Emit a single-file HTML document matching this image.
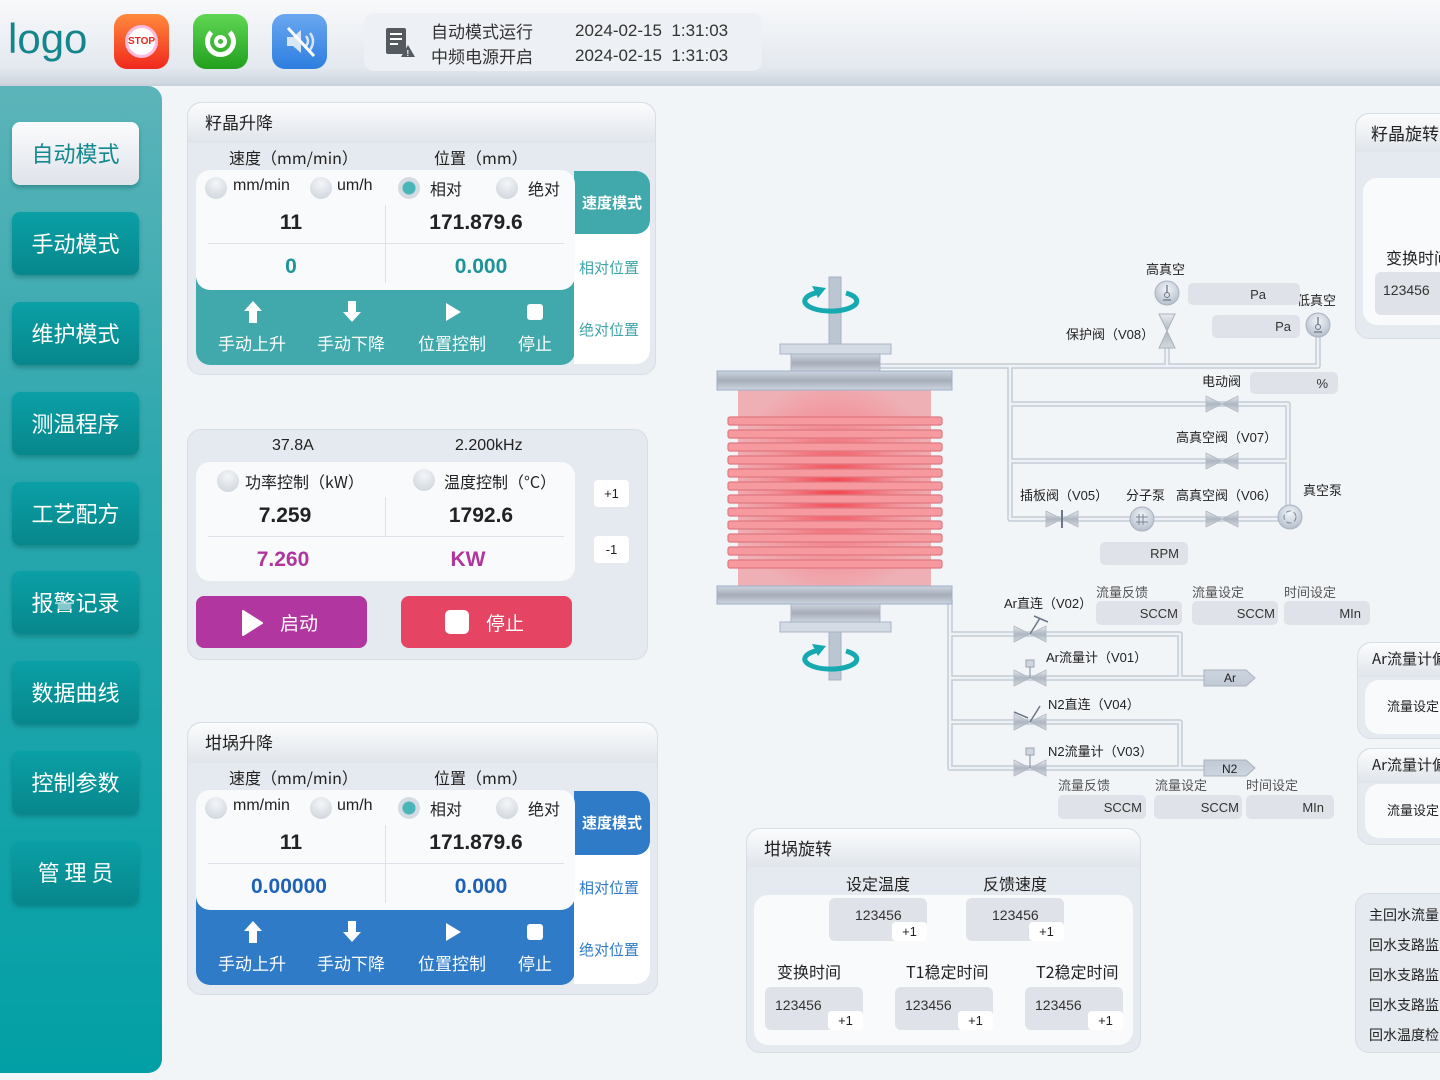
<!DOCTYPE html>
<html><head><meta charset="utf-8">
<style>
*{box-sizing:border-box;margin:0;padding:0}
body{width:1440px;height:1080px;overflow:hidden;background:#f2f5f8;font-family:"Liberation Sans","Noto Sans CJK SC",sans-serif;color:#222;position:relative}
.a{position:absolute;white-space:nowrap}
.hdr{left:0;top:0;width:1440px;height:86px;background:linear-gradient(#f8f9fb,#e4e9ef 80%,#cfd6df);border-bottom:2px solid #c9d1dc}
.ico{top:14px;width:55px;height:55px;border-radius:13px}
.side{left:0;top:86px;width:162px;height:987px;background:linear-gradient(#5cb4b9,#2aa7ad 40%,#02a0a6);border-radius:0 14px 14px 0}
.nb{left:12px;width:127px;height:63px;border-radius:8px;background:linear-gradient(#0aa0a6,#07878c);color:#fff;font-size:22px;text-align:center;line-height:62px;box-shadow:0 3px 4px rgba(0,80,80,.35);font-family:"Noto Sans CJK SC",sans-serif}
.nb.on{background:linear-gradient(#fbfcfd,#dfe3ea);color:#12898f}
.pan{background:#e5eaf0;border-radius:14px;border:1px solid #d8dee6}
.ph{height:40px;border-radius:14px 14px 0 0;background:linear-gradient(#fbfcfd,#e0e5eb);font-size:17px;padding:6px 0 0 17px;font-family:"Noto Sans CJK SC",sans-serif;white-space:nowrap;overflow:hidden}
.card{background:#f8fafc;border-radius:14px}
.cn{font-family:"Noto Sans CJK SC",sans-serif}
.rad{width:22px;height:22px;border-radius:50%;background:radial-gradient(circle at 50% 30%,#f4f6f8,#c9d0d9)}
.rad.on{background:radial-gradient(circle,#48b5b8 0 6px,#d5dbe2 7px)}
.t15{font-size:16px}
.big{font-size:21px;font-weight:bold;text-align:center}
.btn{color:#fff;font-size:17px;text-align:center}
.box{background:#dfe3e9;border-radius:6px;font-size:14px;text-align:right;padding-right:12px;color:#333}
.pb{background:#fff;border-radius:4px;font-size:13px;text-align:center}
</style></head><body>
<div class="a hdr"></div>
<div class="a" style="left:8px;top:14px;font-size:42px;line-height:50px;color:#15858c;font-family:'Liberation Sans',sans-serif">logo</div>
<div class="a ico" style="left:114px;background:linear-gradient(#ff8a3c,#f0281e)"><div class="a" style="left:11px;top:11px;width:33px;height:33px;border-radius:50%;background:#fff;color:#e8281c;font-size:10px;font-weight:bold;text-align:center;line-height:27px;border:3px solid #fbd">STOP</div></div>
<div class="a ico" style="left:193px;background:linear-gradient(#5fd654,#22a01e)"><div class="a" style="left:12px;top:12px;width:31px;height:31px;border-radius:50%;border:5px solid #fff;border-top-color:transparent"></div><div class="a" style="left:21px;top:21px;width:13px;height:13px;border-radius:50%;border:4px solid #fff"></div></div>
<div class="a ico" style="left:272px;background:linear-gradient(#6aa7f0,#2d7ee0)"><svg class="a" style="left:10px;top:10px" width="35" height="35"><path d="M5 13h6l8-7v23l-8-7H5z" fill="#d8e6f6"/><path d="M24 12q4 5 0 10M28 9q6 8 0 17" stroke="#d8e6f6" stroke-width="2.5" fill="none"/><path d="M6 4l26 28" stroke="#fff" stroke-width="3"/></svg></div>
<div class="a" style="left:364px;top:13px;width:398px;height:58px;background:#edf0f4;border-radius:10px"></div>
<svg class="a" style="left:384px;top:27px" width="34" height="32"><rect x="2" y="1" width="20" height="26" rx="2" fill="#555a60"/><path d="M6 7h12M6 12h12M6 17h8" stroke="#fff" stroke-width="2"/><path d="M24 18l7 12h-14z" fill="#555a60"/><text x="22.5" y="29" font-size="8" fill="#fff" font-weight="bold">!</text></svg>
<div class="a cn" style="left:431px;top:18px;font-size:17px;line-height:25px;color:#333">自动模式运行<br>中频电源开启</div>
<div class="a" style="left:575px;top:18px;font-size:17px;line-height:25px;color:#333">2024-02-15&nbsp; 1:31:03<br>2024-02-15&nbsp; 1:31:03</div>

<div class="a side"></div>
<div class="a nb on" style="top:122px">自动模式</div>
<div class="a nb" style="top:212px">手动模式</div>
<div class="a nb" style="top:302px">维护模式</div>
<div class="a nb" style="top:392px">测温程序</div>
<div class="a nb" style="top:482px">工艺配方</div>
<div class="a nb" style="top:571px">报警记录</div>
<div class="a nb" style="top:661px">数据曲线</div>
<div class="a nb" style="top:751px">控制参数</div>
<div class="a nb" style="top:841px">管 理 员</div>

<div class="a pan" style="left:187px;top:102px;width:469px;height:273px"><div class="ph">籽晶升降</div></div>
<div class="a pan" style="left:187px;top:722px;width:471px;height:273px"><div class="ph">坩埚升降</div></div>

<div class="a" style="left:0;top:0">
<div class="a cn t15" style="left:229px;top:145px">速度（mm/min）</div>
<div class="a cn t15" style="left:434px;top:145px">位置（mm）</div>
<div class="a" style="left:196px;top:270px;width:379px;height:95px;background:#41a8ab;border-radius:0 0 14px 14px"></div>
<div class="a" style="left:574px;top:171px;width:76px;height:193px;background:#fff;border-radius:0 14px 14px 0"></div>
<div class="a cn" style="left:574px;top:171px;width:76px;height:63px;background:#41a8ab;border-radius:0 14px 14px 0;color:#fff;font-size:15px;text-align:center;line-height:63px;font-weight:bold">速度模式</div>
<div class="a cn" style="left:579px;top:257px;font-size:15px;color:#3fa5a8">相对位置</div>
<div class="a cn" style="left:579px;top:319px;font-size:15px;color:#3fa5a8">绝对位置</div>
<div class="a card" style="left:196px;top:170px;width:379px;height:120px"></div>
<div class="a rad" style="left:205px;top:177px"></div><div class="a t15" style="left:233px;top:177px">mm/min</div>
<div class="a rad" style="left:310px;top:177px"></div><div class="a t15" style="left:337px;top:177px">um/h</div>
<div class="a rad on" style="left:398px;top:177px"></div><div class="a cn t15" style="left:430px;top:176px">相对</div>
<div class="a rad" style="left:496px;top:177px"></div><div class="a cn t15" style="left:528px;top:176px">绝对</div>
<div class="a" style="left:385px;top:205px;width:1px;height:78px;background:#dde2e8"></div>
<div class="a" style="left:208px;top:243px;width:356px;height:1px;background:#dde2e8"></div>
<div class="a big" style="left:196px;top:211px;width:190px">11</div>
<div class="a big" style="left:386px;top:211px;width:180px">171.879.6</div>
<div class="a big" style="left:196px;top:255px;width:190px;color:#1e9499">0</div>
<div class="a big" style="left:386px;top:255px;width:190px;color:#1e9499">0.000</div>
<svg class="a" style="left:240px;top:300px" width="310" height="26" fill="#fff"><path d="M13 1l9 10h-5v12h-8v-12h-5z"/><path d="M112 22l9-10h-5v-11h-8v11h-5z"/><path d="M206 3l15 9-15 9z"/><rect x="287" y="4" width="16" height="16" rx="3"/></svg>
<div class="a cn btn" style="left:218px;top:330px">手动上升</div>
<div class="a cn btn" style="left:317px;top:330px">手动下降</div>
<div class="a cn btn" style="left:418px;top:330px">位置控制</div>
<div class="a cn btn" style="left:518px;top:330px">停止</div>
</div>

<div class="a" style="left:0;top:620px">
<div class="a cn t15" style="left:229px;top:145px">速度（mm/min）</div>
<div class="a cn t15" style="left:434px;top:145px">位置（mm）</div>
<div class="a" style="left:196px;top:270px;width:379px;height:95px;background:#2f7bc8;border-radius:0 0 14px 14px"></div>
<div class="a" style="left:574px;top:171px;width:76px;height:193px;background:#fff;border-radius:0 14px 14px 0"></div>
<div class="a cn" style="left:574px;top:171px;width:76px;height:64px;background:#2f7bc8;border-radius:0 14px 14px 0;color:#fff;font-size:15px;text-align:center;line-height:64px;font-weight:bold">速度模式</div>
<div class="a cn" style="left:579px;top:257px;font-size:15px;color:#2f7bc8">相对位置</div>
<div class="a cn" style="left:579px;top:319px;font-size:15px;color:#2f7bc8">绝对位置</div>
<div class="a card" style="left:196px;top:170px;width:379px;height:120px"></div>
<div class="a rad" style="left:205px;top:177px"></div><div class="a t15" style="left:233px;top:177px">mm/min</div>
<div class="a rad" style="left:310px;top:177px"></div><div class="a t15" style="left:337px;top:177px">um/h</div>
<div class="a rad on" style="left:398px;top:177px"></div><div class="a cn t15" style="left:430px;top:176px">相对</div>
<div class="a rad" style="left:496px;top:177px"></div><div class="a cn t15" style="left:528px;top:176px">绝对</div>
<div class="a" style="left:385px;top:205px;width:1px;height:78px;background:#dde2e8"></div>
<div class="a" style="left:208px;top:243px;width:356px;height:1px;background:#dde2e8"></div>
<div class="a big" style="left:196px;top:211px;width:190px">11</div>
<div class="a big" style="left:386px;top:211px;width:180px">171.879.6</div>
<div class="a big" style="left:196px;top:255px;width:186px;color:#1e62b8">0.00000</div>
<div class="a big" style="left:386px;top:255px;width:190px;color:#1e62b8">0.000</div>
<svg class="a" style="left:240px;top:300px" width="310" height="26" fill="#fff"><path d="M13 1l9 10h-5v12h-8v-12h-5z"/><path d="M112 22l9-10h-5v-11h-8v11h-5z"/><path d="M206 3l15 9-15 9z"/><rect x="287" y="4" width="16" height="16" rx="3"/></svg>
<div class="a cn btn" style="left:218px;top:330px">手动上升</div>
<div class="a cn btn" style="left:317px;top:330px">手动下降</div>
<div class="a cn btn" style="left:418px;top:330px">位置控制</div>
<div class="a cn btn" style="left:518px;top:330px">停止</div>
</div>

<div class="a pan" style="left:187px;top:429px;width:461px;height:231px"></div>
<div class="a t15" style="left:272px;top:437px">37.8A</div>
<div class="a t15" style="left:455px;top:437px">2.200kHz</div>
<div class="a card" style="left:196px;top:462px;width:379px;height:119px"></div>
<div class="a rad" style="left:217px;top:470px"></div><div class="a cn t15" style="left:245px;top:469px">功率控制（kW）</div>
<div class="a rad" style="left:413px;top:469px"></div><div class="a cn t15" style="left:444px;top:469px">温度控制（°C）</div>
<div class="a" style="left:385px;top:497px;width:1px;height:40px;background:#dde2e8"></div>
<div class="a" style="left:208px;top:536px;width:356px;height:1px;background:#dde2e8"></div>
<div class="a big" style="left:190px;top:504px;width:190px">7.259</div>
<div class="a big" style="left:386px;top:504px;width:190px">1792.6</div>
<div class="a big" style="left:188px;top:548px;width:190px;color:#b0369f">7.260</div>
<div class="a big" style="left:373px;top:548px;width:190px;color:#b0369f">KW</div>
<div class="a pb" style="left:594px;top:480px;width:35px;height:27px;line-height:27px">+1</div>
<div class="a pb" style="left:594px;top:536px;width:35px;height:27px;line-height:27px">-1</div>
<div class="a" style="left:196px;top:596px;width:171px;height:52px;background:#b2369f;border-radius:8px"></div>
<svg class="a" style="left:240px;top:609px" width="24" height="28"><path d="M3 2l19 12-19 12z" fill="#fff" stroke="#fff" stroke-linejoin="round" stroke-width="2"/></svg>
<div class="a cn" style="left:280px;top:609px;color:#fff;font-size:19px">启动</div>
<div class="a" style="left:401px;top:596px;width:171px;height:52px;background:#e54462;border-radius:8px"></div>
<div class="a" style="left:445px;top:610px;width:24px;height:24px;background:#fff;border-radius:5px"></div>
<div class="a cn" style="left:486px;top:609px;color:#fff;font-size:19px">停止</div>

<div class="a pan" style="left:746px;top:828px;width:395px;height:225px"><div class="ph" style="height:38px">坩埚旋转</div></div>
<div class="a card" style="left:754px;top:895px;width:379px;height:150px"></div>
<div class="a cn t15" style="left:846px;top:871px">设定温度</div>
<div class="a cn t15" style="left:983px;top:871px">反馈速度</div>
<div class="a box" style="left:829px;top:898px;width:98px;height:43px;text-align:left;padding:9px 0 0 26px">123456</div><div class="a pb" style="left:892px;top:922px;width:35px;height:19px;line-height:19px">+1</div>
<div class="a box" style="left:966px;top:898px;width:98px;height:43px;text-align:left;padding:9px 0 0 26px">123456</div><div class="a pb" style="left:1029px;top:922px;width:35px;height:19px;line-height:19px">+1</div>
<div class="a cn t15" style="left:777px;top:959px">变换时间</div>
<div class="a cn t15" style="left:906px;top:959px">T1稳定时间</div>
<div class="a cn t15" style="left:1036px;top:959px">T2稳定时间</div>
<div class="a box" style="left:765px;top:987px;width:98px;height:43px;text-align:left;padding:10px 0 0 10px">123456</div><div class="a pb" style="left:828px;top:1011px;width:35px;height:19px;line-height:19px">+1</div>
<div class="a box" style="left:895px;top:987px;width:98px;height:43px;text-align:left;padding:10px 0 0 10px">123456</div><div class="a pb" style="left:958px;top:1011px;width:35px;height:19px;line-height:19px">+1</div>
<div class="a box" style="left:1025px;top:987px;width:98px;height:43px;text-align:left;padding:10px 0 0 10px">123456</div><div class="a pb" style="left:1088px;top:1011px;width:35px;height:19px;line-height:19px">+1</div>

<div class="a pan" style="left:1355px;top:113px;width:100px;height:226px"><div class="ph" style="height:38px;padding-left:15px">籽晶旋转</div></div>
<div class="a card" style="left:1363px;top:178px;width:90px;height:147px"></div>
<div class="a cn t15" style="left:1386px;top:245px">变换时间</div>
<div class="a box" style="left:1375px;top:272px;width:80px;height:43px;text-align:left;padding:10px 0 0 8px">123456</div>
<div class="a pan" style="left:1357px;top:642px;width:100px;height:97px"><div class="ph" style="height:34px;padding:5px 0 0 14px;font-size:15px">Ar流量计偏差</div></div>
<div class="a card" style="left:1365px;top:680px;width:90px;height:54px"></div><div class="a cn" style="left:1387px;top:696px;font-size:13px">流量设定</div>
<div class="a pan" style="left:1357px;top:748px;width:100px;height:97px"><div class="ph" style="height:34px;padding:5px 0 0 14px;font-size:15px">Ar流量计偏差</div></div>
<div class="a card" style="left:1365px;top:784px;width:90px;height:54px"></div><div class="a cn" style="left:1387px;top:800px;font-size:13px">流量设定</div>
<div class="a pan" style="left:1355px;top:893px;width:100px;height:160px"></div>
<div class="a cn" style="left:1369px;top:900px;font-size:14px;line-height:30px">主回水流量<br>回水支路监<br>回水支路监<br>回水支路监<br>回水温度检</div>

<svg class="a" style="left:0;top:0" width="1440" height="1080">
<defs>
<linearGradient id="vg" x1="0" y1="0" x2="0" y2="1"><stop offset="0" stop-color="#e8ecf1"/><stop offset=".5" stop-color="#aeb6c0"/><stop offset="1" stop-color="#d4d9e0"/></linearGradient>
<linearGradient id="pl" x1="0" y1="0" x2="0" y2="1"><stop offset="0" stop-color="#cdd5e0"/><stop offset=".5" stop-color="#a6adb8"/><stop offset="1" stop-color="#cdd5e0"/></linearGradient>
<radialGradient id="ht" cx=".5" cy=".5" r=".55"><stop offset="0" stop-color="#f4424c"/><stop offset=".6" stop-color="#f2939a"/><stop offset="1" stop-color="#eeb0b5"/></radialGradient>
<radialGradient id="gg" cx=".5" cy=".35" r=".6"><stop offset="0" stop-color="#f2f5f8"/><stop offset="1" stop-color="#b9c3cf"/></radialGradient>
<g id="bv"><path d="M-16 -8L0 0L-16 8Z M16 -8L0 0L16 8Z" fill="url(#vg)" stroke="#b0b8c2" stroke-width=".8"/></g>
</defs>
<g fill="none" stroke="#c4ccd6" stroke-width="5.5" stroke-linejoin="round">
<path d="M880 366H1318V328"/><path d="M1167 366V345"/>
<path d="M1010 366V519H1290"/><path d="M1010 404H1288V517"/><path d="M1010 461H1288"/>
<path d="M950 600V768H1205"/><path d="M950 634H1180V678"/><path d="M950 678H1205"/><path d="M950 722H1180V768"/>
</g>
<g fill="none" stroke="#eef1f5" stroke-width="2.5" stroke-linejoin="round">
<path d="M880 366H1318V328"/><path d="M1167 366V345"/>
<path d="M1010 366V519H1290"/><path d="M1010 404H1288V517"/><path d="M1010 461H1288"/>
<path d="M950 600V768H1205"/><path d="M950 634H1180V678"/><path d="M950 678H1205"/><path d="M950 722H1180V768"/>
</g>
<rect x="829" y="277" width="12" height="403" fill="#bcc6d3" stroke="#a6b2c2"/>
<rect x="780" y="344" width="111" height="10" fill="#d4dbe4" stroke="#a9b5c6"/>
<rect x="791" y="354" width="89" height="18" fill="url(#pl)" stroke="#a9b5c6"/>
<rect x="738" y="389" width="193" height="197" fill="url(#ht)"/>
<g fill="#f79aa0" stroke="#e07880" stroke-width="1.2">
<rect x="728" y="417" width="214" height="8" rx="2"/><rect x="728" y="430" width="214" height="8" rx="2"/><rect x="728" y="443" width="214" height="8" rx="2"/><rect x="728" y="456" width="214" height="8" rx="2"/><rect x="728" y="469" width="214" height="8" rx="2"/><rect x="728" y="482" width="214" height="8" rx="2"/><rect x="728" y="495" width="214" height="8" rx="2"/><rect x="728" y="508" width="214" height="8" rx="2"/><rect x="728" y="521" width="214" height="8" rx="2"/><rect x="728" y="534" width="214" height="8" rx="2"/><rect x="728" y="547" width="214" height="8" rx="2"/><rect x="728" y="560" width="214" height="8" rx="2"/>
</g>
<rect x="717" y="371" width="235" height="19" fill="url(#pl)" stroke="#9fb0c8"/>
<rect x="717" y="586" width="235" height="18" fill="url(#pl)" stroke="#9fb0c8"/>
<rect x="791" y="604" width="89" height="18" fill="url(#pl)" stroke="#a9b5c6"/>
<rect x="780" y="622" width="111" height="10" fill="#d4dbe4" stroke="#a9b5c6"/>
<g fill="none" stroke="#16aab0" stroke-width="5"><path d="M846 293a26 10 0 1 1 -26 -1"/><path d="M846 651a26 10 0 1 1 -26 -1"/></g>
<path d="M812 286l14 2-8 10z M812 644l14 2-8 10z" fill="#16aab0"/>
<circle cx="1167" cy="293" r="12" fill="url(#gg)" stroke="#a8b3c0"/><circle cx="1318" cy="325" r="12" fill="url(#gg)" stroke="#a8b3c0"/>
<path d="M1167 285v8M1163 300h8M1318 317v8M1314 332h8" stroke="#6b7686" stroke-width="1.3"/><circle cx="1167" cy="295" r="2.5" fill="none" stroke="#6b7686"/><circle cx="1318" cy="327" r="2.5" fill="none" stroke="#6b7686"/>
<path d="M1159 314h16l-8 17 8 17h-16l8-17z" fill="url(#vg)" stroke="#aab2bc"/>
<use href="#bv" x="1222" y="404"/><use href="#bv" x="1222" y="461"/><use href="#bv" x="1062" y="519"/><use href="#bv" x="1222" y="519"/>
<path d="M1062 510v18" stroke="#6b7686" stroke-width="2"/>
<circle cx="1142" cy="519" r="12" fill="url(#gg)" stroke="#a8b3c0"/><path d="M1136 517h12M1136 522h12M1139 514v11M1143 514v11" stroke="#7a8696"/>
<circle cx="1290" cy="517" r="12" fill="url(#gg)" stroke="#a8b3c0"/><circle cx="1290" cy="517" r="6" fill="none" stroke="#7a8696" stroke-dasharray="5 3"/>
<use href="#bv" x="1030" y="634"/><use href="#bv" x="1030" y="678"/><use href="#bv" x="1030" y="722"/><use href="#bv" x="1030" y="768"/>
<path d="M1030 634l10-16M1034 616l14 6M1030 722l10-16M1014 712l14 6" stroke="#6b7686" stroke-width="1.5"/>
<rect x="1026" y="660" width="8" height="7" fill="#d0d6de" stroke="#9aa4b0"/><path d="M1030 667v11" stroke="#7a8696"/>
<rect x="1026" y="748" width="8" height="7" fill="#d0d6de" stroke="#9aa4b0"/><path d="M1030 755v13" stroke="#7a8696"/>
<path d="M1204 670h42l9 8-9 8h-42z M1204 760h42l9 8-9 8h-42z" fill="url(#pl)" stroke="#aab3bd"/>
<g font-family="Liberation Sans,Noto Sans CJK SC,sans-serif" font-size="13" fill="#222">
<text x="1146" y="274">高真空</text><text x="1297" y="305">低真空</text><text x="1066" y="339">保护阀（V08）</text>
<text x="1202" y="386">电动阀</text><text x="1176" y="442">高真空阀（V07）</text>
<text x="1020" y="500">插板阀（V05）</text><text x="1126" y="500">分子泵</text><text x="1176" y="500">高真空阀（V06）</text><text x="1303" y="495">真空泵</text>
<text x="1004" y="608">Ar直连（V02）</text><text x="1046" y="662">Ar流量计（V01）</text><text x="1048" y="709">N2直连（V04）</text><text x="1048" y="756">N2流量计（V03）</text>
<text x="1224" y="682" font-size="12">Ar</text><text x="1222" y="773" font-size="12">N2</text>
</g>
<g font-family="Liberation Sans,Noto Sans CJK SC,sans-serif" font-size="13" fill="#555">
<text x="1096" y="597">流量反馈</text><text x="1192" y="597">流量设定</text><text x="1284" y="597">时间设定</text>
<text x="1058" y="790">流量反馈</text><text x="1155" y="790">流量设定</text><text x="1246" y="790">时间设定</text>
</g>
<g fill="#dfe3e9"><rect x="1188" y="283" width="112" height="22" rx="5"/><rect x="1212" y="315" width="88" height="23" rx="5"/><rect x="1250" y="372" width="88" height="22" rx="5"/><rect x="1100" y="542" width="88" height="23" rx="5"/>
<rect x="1096" y="601" width="86" height="24" rx="5"/><rect x="1192" y="601" width="86" height="24" rx="5"/><rect x="1284" y="601" width="86" height="24" rx="5"/>
<rect x="1058" y="795" width="88" height="24" rx="5"/><rect x="1154" y="795" width="88" height="24" rx="5"/><rect x="1246" y="795" width="88" height="24" rx="5"/></g>
<g font-family="Liberation Sans,sans-serif" font-size="13" fill="#333" text-anchor="end">
<text x="1266" y="299">Pa</text><text x="1291" y="331">Pa</text><text x="1328" y="388">%</text><text x="1179" y="558">RPM</text>
<text x="1178" y="618">SCCM</text><text x="1275" y="618">SCCM</text><text x="1361" y="618">MIn</text>
<text x="1142" y="812">SCCM</text><text x="1239" y="812">SCCM</text><text x="1324" y="812">MIn</text>
</g>
</svg>
</body></html>
